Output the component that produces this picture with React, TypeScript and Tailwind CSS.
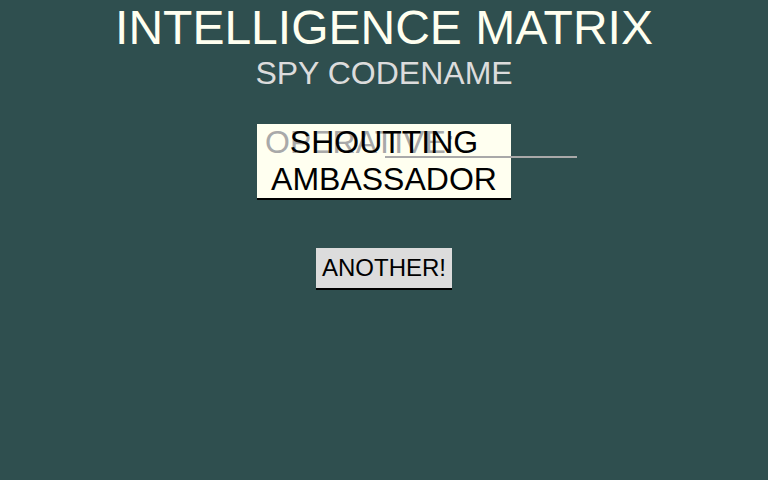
export default function App() {
  return (
    <main className="flex min-h-screen flex-col items-center bg-[#2f4f4f] text-center font-['Liberation_Sans',Arial,sans-serif] uppercase">
      <h1 className="text-5xl leading-[55px] text-[#fffff0]">Intelligence Matrix</h1>
      <h2 className="text-[32px] leading-[37px] text-[#dcdcdc]">Spy Codename</h2>
      <section className="relative mt-8 w-[254px] border-b-2 border-black bg-[#fffff0]">
        <span className="absolute top-0 left-2 text-[32px] leading-[37px] text-[#a9a9a9]">Operative:</span>
        <span className="absolute top-8 left-32 h-0.5 w-48 bg-[#a9a9a9]" />
        <p className="relative text-[32px] leading-[37px] text-black">Shoutting Ambassador</p>
      </section>
      <button type="button" className="mt-12 h-[42px] border-b-2 border-black bg-[#dcdcdc] px-1.5 text-2xl leading-10 text-black uppercase">
        Another!
      </button>
    </main>
  );
}
